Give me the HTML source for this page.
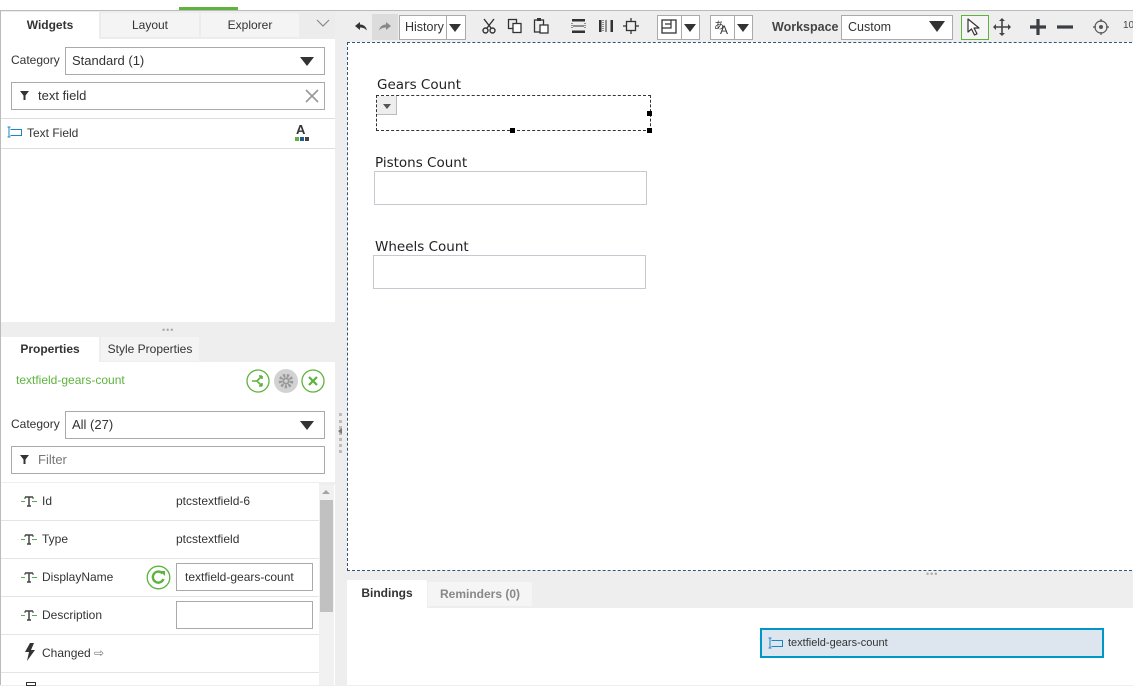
<!DOCTYPE html>
<html><head><meta charset="utf-8"><style>
*{box-sizing:border-box;margin:0;padding:0}
body{width:1133px;height:685px;overflow:hidden;background:#eeeeee;font-family:"Liberation Sans",sans-serif;font-size:12px;color:#333;position:relative}
.a{position:absolute}
.sel{position:absolute;background:#fff;border:1px solid #aaa;font-size:13px;padding-left:6px;line-height:26px}
.tri{position:absolute;width:0;height:0;border-left:7px solid transparent;border-right:7px solid transparent;border-top:9px solid #333}
.row{position:absolute;left:1px;width:318px;height:38px;border-bottom:1px solid #e4e4e4;background:#fff}
.row svg{position:absolute;left:20px;top:12px}
.row .l{position:absolute;left:41px;top:11px;font-size:12px}
.row .v{position:absolute;left:175px;top:11px;font-size:12px}
.lbl{position:absolute;font-family:"DejaVu Sans",sans-serif;font-size:13.5px;color:#222}
.fld{position:absolute;background:#fff;border:1px solid #c6c9cf}
.ic{position:absolute;color:#333;font-size:14px}
</style></head><body>
<div class="a" style="left:0;top:0;width:1133px;height:11px;background:#fff;border-bottom:1px solid #bbb"></div>
<div class="a" style="left:179px;top:7px;width:59px;height:3px;background:#5db33d"></div>
<div class="a" style="left:0;top:11px;width:1px;height:674px;background:#bbb"></div>

<div class="a" style="left:1px;top:12px;width:334px;height:27px;background:#ececec"></div>
<div class="a" style="left:1px;top:12px;width:98px;height:27px;background:#fff;font-weight:bold;font-size:12px;text-align:center;line-height:26px">Widgets</div>
<div class="a" style="left:101px;top:13px;width:98px;height:24px;background:#f4f4f4;font-size:12px;text-align:center;line-height:24px">Layout</div>
<div class="a" style="left:201px;top:13px;width:98px;height:24px;background:#f4f4f4;font-size:12px;text-align:center;line-height:24px">Explorer</div>
<svg class="a" style="left:316px;top:19px" width="14" height="9"><path d="M1 1 L7 7 L13 1" fill="none" stroke="#888" stroke-width="1.2"/></svg>

<div class="a" style="left:1px;top:39px;width:334px;height:283px;background:#fff"></div>
<div class="a" style="left:11px;top:53px;font-size:12px">Category</div>
<div class="sel" style="left:65px;top:47px;width:260px;height:28px">Standard (1)</div>
<div class="tri" style="left:300px;top:57px"></div>
<div class="sel" style="left:11px;top:82px;width:314px;height:28px;padding-left:26px">text field</div>
<svg class="a" style="left:20px;top:91px" width="9" height="10"><path d="M0 0H9L5.5 4.5V9H3.5V4.5Z" fill="#333"/></svg>
<svg class="a" style="left:305px;top:89px" width="14" height="14"><path d="M1 1L13 13M13 1L1 13" stroke="#999" stroke-width="1.6"/></svg>
<div class="a" style="left:1px;top:118px;width:334px;height:1px;background:#ddd"></div>
<div class="a" style="left:1px;top:148px;width:334px;height:1px;background:#ddd"></div>
<svg class="a" style="left:6px;top:126px" width="17" height="12"><path d="M3 1v10M1.5 1h3M1.5 11h3" stroke="#1a87c1" stroke-width="1"/><path d="M4.5 3.5h11v6h-11" fill="none" stroke="#1a87c1"/></svg>
<div class="a" style="left:27px;top:126px;font-size:12px">Text Field</div>
<div class="a" style="left:296px;top:122px;font-weight:bold;font-size:13px;color:#333">A</div>
<div class="a" style="left:295px;top:137px;width:4px;height:4px;background:#5db33d"></div>
<div class="a" style="left:300px;top:137px;width:4px;height:4px;background:#1f5d8c"></div>
<div class="a" style="left:305px;top:137px;width:4px;height:4px;background:#444"></div>
<div class="a" style="left:162px;top:325px;color:#aaa;font-size:9px;letter-spacing:1px">•••</div>

<div class="a" style="left:1px;top:337px;width:98px;height:26px;background:#fff;font-weight:bold;font-size:12px;text-align:center;line-height:24px">Properties</div>
<div class="a" style="left:101px;top:337px;width:98px;height:24px;background:#f4f4f4;font-size:12px;text-align:center;line-height:24px">Style Properties</div>
<div class="a" style="left:1px;top:362px;width:334px;height:323px;background:#fff"></div>
<div class="a" style="left:16px;top:373px;color:#5db33d;font-size:12px">textfield-gears-count</div>
<svg class="a" style="left:246px;top:369px" width="80" height="25">
<circle cx="12" cy="12" r="11" fill="#fff" stroke="#5db33d" stroke-width="1.3"/>
<path d="M6 12h5M11 12l5-5M11 12l5 5M16 7h-3M16 7v3M16 17h-3M16 17v-3" stroke="#5db33d" stroke-width="1.6" fill="none"/>
<circle cx="40" cy="12" r="12" fill="#d2d2d2"/>
<circle cx="40" cy="12" r="5.5" fill="none" stroke="#999" stroke-width="3.5" stroke-dasharray="2.2 1.6"/>
<circle cx="40" cy="12" r="3.5" fill="#999"/>
<circle cx="40" cy="12" r="1.8" fill="#d2d2d2"/>
<circle cx="67" cy="12" r="11" fill="#fff" stroke="#5db33d" stroke-width="1.3"/>
<path d="M63 8l8 8M71 8l-8 8" stroke="#5db33d" stroke-width="2.2"/>
</svg>
<div class="a" style="left:11px;top:417px;font-size:12px">Category</div>
<div class="sel" style="left:65px;top:411px;width:260px;height:28px">All (27)</div>
<div class="tri" style="left:300px;top:421px"></div>
<div class="sel" style="left:11px;top:446px;width:314px;height:28px;padding-left:26px;color:#777">Filter</div>
<svg class="a" style="left:20px;top:455px" width="9" height="10"><path d="M0 0H9L5.5 4.5V9H3.5V4.5Z" fill="#333"/></svg>
<div class="a" style="left:1px;top:482px;width:334px;height:3px;background:#eee"></div>

<svg width="0" height="0" style="position:absolute"><defs><g id="tt"><path d="M0 6.5h4M11 6.5h5" stroke="#5a5" stroke-width="1"/><path d="M4 2h8M8 2v9M6 11h4" stroke="#444" stroke-width="1.5" fill="none"/><path d="M4 2v2M12 2v2" stroke="#444" stroke-width="1"/></g></defs></svg>
<div class="row" style="top:483px"><svg width="17" height="13"><use href="#tt"/></svg><span class="l">Id</span><span class="v">ptcstextfield-6</span></div>
<div class="row" style="top:521px"><svg width="17" height="13"><use href="#tt"/></svg><span class="l">Type</span><span class="v">ptcstextfield</span></div>
<div class="row" style="top:559px"><svg width="17" height="13"><use href="#tt"/></svg><span class="l">DisplayName</span></div>
<div class="row" style="top:597px"><svg width="17" height="13"><use href="#tt"/></svg><span class="l">Description</span></div>
<div class="row" style="top:635px"><span class="l">Changed <span style="color:#777">⇨</span></span></div>
<svg class="a" style="left:24px;top:643px" width="12" height="18"><path d="M6 0L1 9h4L3 18 11 7H7L10 0Z" fill="#333"/></svg>
<div class="a" style="left:26px;top:682px;width:10px;height:4px;border:1px solid #333"></div>
<svg class="a" style="left:146px;top:565px" width="25" height="25"><circle cx="12.5" cy="12.5" r="11.3" fill="#fff" stroke="#5db33d" stroke-width="1.3"/><path d="M16.5 8.5A5.5 5.5 0 1 0 17.5 14" fill="none" stroke="#5db33d" stroke-width="2.4"/><path d="M14 6h5v5z" fill="#5db33d"/></svg>
<div class="fld" style="left:176px;top:563px;width:137px;height:28px;border-color:#aaa;font-size:12px;padding:6px 8px">textfield-gears-count</div>
<div class="fld" style="left:176px;top:601px;width:137px;height:28px;border-color:#aaa"></div>
<div class="a" style="left:319px;top:485px;width:15px;height:200px;background:#f1f1f1"></div>
<div class="a" style="left:322px;top:490px;width:0;height:0;border-left:4px solid transparent;border-right:4px solid transparent;border-bottom:4px solid #a3a3a3"></div>
<div class="a" style="left:320px;top:500px;width:13px;height:112px;background:#c1c1c1"></div>

<div class="a" style="left:339px;top:413px;width:3px;height:40px;border-left:3px dotted #bbb"></div>
<div class="a" style="left:338px;top:428px;width:0;height:0;border-top:3px solid transparent;border-bottom:3px solid transparent;border-right:4px solid #777"></div>

<svg class="a" style="left:354px;top:20px" width="14" height="12"><path d="M6 2L1 6l5 4V7.5c3 0 5 1 7 3C12 6 9 4.5 6 4.5Z" fill="#333"/></svg>
<div class="a" style="left:372px;top:14px;width:26px;height:26px;background:#dcdcdc"></div>
<svg class="a" style="left:378px;top:20px" width="14" height="12"><path d="M8 2l5 4-5 4V7.5c-3 0-5 1-7 3C2 6 5 4.5 8 4.5Z" fill="#888"/></svg>
<div class="sel" style="left:399px;top:15px;width:67px;height:25px;line-height:23px;font-size:12.5px;padding-left:5px">History</div>
<div class="a" style="left:446px;top:15px;width:1px;height:25px;background:#aaa"></div>
<div class="tri" style="left:449px;top:24px;border-left-width:6px;border-right-width:6px;border-top-width:8px"></div>
<svg class="a" style="left:481px;top:18px" width="16" height="16"><path d="M3 1l7 9M13 1l-7 9" stroke="#333" stroke-width="1.4"/><circle cx="4.5" cy="12.5" r="2.5" fill="none" stroke="#333" stroke-width="1.4"/><circle cx="11.5" cy="12.5" r="2.5" fill="none" stroke="#333" stroke-width="1.4"/></svg>
<svg class="a" style="left:507px;top:18px" width="16" height="16"><rect x="1.5" y="1.5" width="8" height="9" fill="none" stroke="#333" stroke-width="1.3"/><rect x="6" y="5.5" width="8" height="9" fill="#fff" stroke="#333" stroke-width="1.3"/></svg>
<svg class="a" style="left:533px;top:17px" width="17" height="17"><rect x="1.5" y="3" width="9" height="12" fill="none" stroke="#333" stroke-width="1.3"/><rect x="4" y="1" width="4" height="3" fill="#333"/><rect x="7" y="8" width="8" height="8" fill="#fff" stroke="#333" stroke-width="1.3"/></svg>
<svg class="a" style="left:571px;top:18px" width="15" height="16"><rect x="1" y="1" width="13" height="2.5" fill="#333"/><rect x="1" y="12.5" width="13" height="2.5" fill="#333"/><path d="M2 8h11" stroke="#333"/><path d="M1 5v6M14 5v6" stroke="#333" stroke-dasharray="1 1"/></svg>
<svg class="a" style="left:598px;top:18px" width="16" height="16"><rect x="1" y="2" width="2.5" height="12" fill="#333"/><rect x="12.5" y="2" width="2.5" height="12" fill="#333"/><path d="M8 2v12" stroke="#333"/><path d="M5 2v12" stroke="#333" stroke-dasharray="1 1"/></svg>
<svg class="a" style="left:623px;top:18px" width="16" height="16"><rect x="3.5" y="3.5" width="9" height="9" fill="none" stroke="#333" stroke-width="1.3"/><path d="M8 0v3.5M8 12.5V16M0 8h3.5M12.5 8H16" stroke="#333" stroke-width="1.3"/></svg>
<div class="sel" style="left:657px;top:15px;width:43px;height:25px"></div>
<svg class="a" style="left:661px;top:19px" width="16" height="15"><rect x="1" y="1" width="14" height="13" fill="none" stroke="#333" stroke-width="1.3"/><path d="M1 9h9V1M4 5h6" stroke="#333" stroke-width="1.2" fill="none"/></svg>
<div class="a" style="left:681px;top:15px;width:1px;height:25px;background:#aaa"></div>
<div class="tri" style="left:684px;top:24px;border-left-width:6px;border-right-width:6px;border-top-width:8px"></div>
<div class="sel" style="left:710px;top:15px;width:43px;height:25px"></div>
<div class="a" style="left:714px;top:17px;font-family:'Noto Sans CJK JP',sans-serif;font-size:10px;color:#333">あ</div>
<div class="a" style="left:720px;top:23px;font-size:12px;color:#333">A</div>
<div class="a" style="left:734px;top:15px;width:1px;height:25px;background:#aaa"></div>
<div class="tri" style="left:737px;top:24px;border-left-width:6px;border-right-width:6px;border-top-width:8px"></div>
<div class="a" style="left:772px;top:20px;font-weight:bold;font-size:12.5px;color:#444">Workspace</div>
<div class="sel" style="left:841px;top:15px;width:112px;height:25px;line-height:23px;font-size:12.5px">Custom</div>
<div class="tri" style="left:929px;top:21px;border-left-width:8px;border-right-width:8px;border-top-width:11px"></div>
<div class="a" style="left:961px;top:15px;width:28px;height:25px;border:1px solid #5db33d;background:#f5f5f5"></div>
<svg class="a" style="left:966px;top:18px" width="18" height="18"><path d="M2 1L2 14 5.5 11 8.5 17 11 15.8 8 10 13 10Z" fill="#fff" stroke="#333" stroke-width="1.2" stroke-linejoin="round"/></svg>
<svg class="a" style="left:993px;top:18px" width="18" height="18"><path d="M9 1v16M1 9h16" stroke="#444" stroke-width="1.6"/><path d="M9 0l-3 3h6zM9 18l-3-3h6zM0 9l3-3v6zM18 9l-3-3v6z" fill="#444"/></svg>
<svg class="a" style="left:1029px;top:18px" width="18" height="18"><path d="M9 1v16M1 9h16" stroke="#3b3f45" stroke-width="3.2"/></svg>
<svg class="a" style="left:1056px;top:18px" width="18" height="18"><path d="M1 9h16" stroke="#3b3f45" stroke-width="3.2"/></svg>
<svg class="a" style="left:1093px;top:19px" width="16" height="16"><circle cx="8" cy="8" r="6" fill="none" stroke="#555" stroke-width="1.2"/><circle cx="8" cy="8" r="2" fill="#555"/><path d="M8 0v3M8 13v3M0 8h3M13 8h3" stroke="#555" stroke-width="1.2"/></svg>
<div class="a" style="left:1123px;top:20px;font-size:10px;color:#444">10</div>

<div class="a" style="left:347px;top:42px;width:800px;height:529px;background:#fff;border:1px dashed #2f5678"></div>
<div class="lbl" style="left:377px;top:77px">Gears Count</div>
<div class="a" style="left:376px;top:95px;width:275px;height:36px;background:#fff;border:1px dashed #333"></div>
<div class="a" style="left:377px;top:96px;width:20px;height:19px;background:#eee;border-right:1px solid #bbb;border-bottom:1px solid #bbb"></div>
<div class="a" style="left:383px;top:104px;width:0;height:0;border-left:4px solid transparent;border-right:4px solid transparent;border-top:5px solid #555"></div>
<div class="a" style="left:647px;top:111px;width:5px;height:5px;background:#000"></div>
<div class="a" style="left:647px;top:128px;width:5px;height:5px;background:#000"></div>
<div class="a" style="left:510px;top:128px;width:5px;height:5px;background:#000"></div>
<div class="lbl" style="left:375px;top:155px">Pistons Count</div>
<div class="fld" style="left:374px;top:171px;width:273px;height:34px"></div>
<div class="lbl" style="left:375px;top:239px">Wheels Count</div>
<div class="fld" style="left:373px;top:255px;width:273px;height:34px"></div>
<div class="a" style="left:926px;top:569px;color:#aaa;font-size:9px;letter-spacing:1px">•••</div>

<div class="a" style="left:347px;top:580px;width:80px;height:28px;background:#fff;font-weight:bold;font-size:12px;text-align:center;line-height:27px;color:#333">Bindings</div>
<div class="a" style="left:428px;top:582px;width:104px;height:24px;background:#f5f5f5;font-weight:bold;font-size:12px;text-align:center;line-height:24px;color:#888">Reminders (0)</div>
<div class="a" style="left:347px;top:608px;width:786px;height:77px;background:#fff"></div>
<div class="a" style="left:760px;top:628px;width:344px;height:30px;background:#dde6ef;border:2px solid #0096c8"></div>
<svg class="a" style="left:767px;top:637px" width="17" height="12"><path d="M3 1v10M1.5 1h3M1.5 11h3" stroke="#1a87c1" stroke-width="1"/><path d="M4.5 3.5h11v6h-11" fill="none" stroke="#1a87c1"/></svg>
<div class="a" style="left:788px;top:637px;font-size:11px;color:#333">textfield-gears-count</div>
</body></html>
